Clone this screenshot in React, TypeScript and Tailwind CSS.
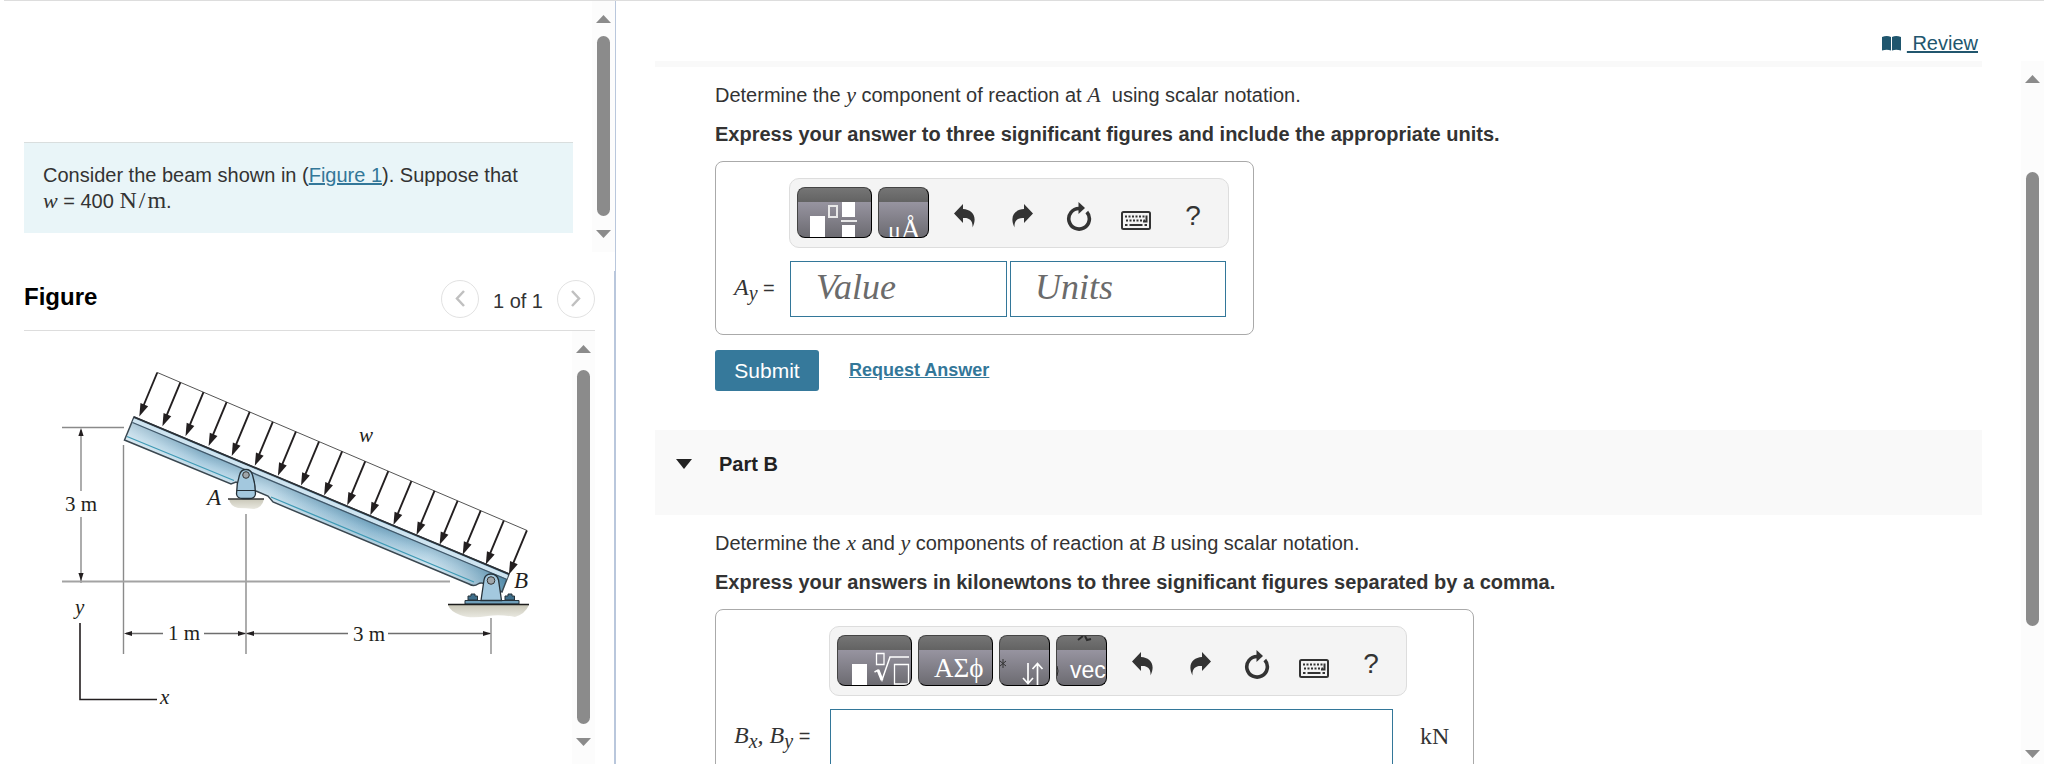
import type { ReactNode } from 'react'

const BLUE = '#a3c8de'

// grey scrollbar, thumb length and offset differ per pane
const Scrollbar = ({ className = '', thumb }: { className?: string; thumb: string }) => {
  return (
    <div className={`flex w-[23px] shrink-0 flex-col items-center bg-[#fcfcfc] ${className}`}>
      <svg width="15" height="8" viewBox="0 0 15 8" className="shrink-0"><path d="M7.5 0 15 8H0z" fill="#8b8b8b" /></svg>
      <div className={`w-[13px] rounded-full bg-[#8b8b8b] ${thumb}`} />
      <svg width="15" height="8" viewBox="0 0 15 8" className="mt-auto shrink-0"><path d="M0 0H15L7.5 8z" fill="#8b8b8b" /></svg>
    </div>
  )
}

const M = ({ children }: { children: ReactNode }) => (
  <i className="font-['Liberation_Serif',serif] text-[22px] leading-none">{children}</i>
)

// variable name in front of an answer field
const Name = ({ children }: { children: ReactNode }) => (
  <i className="font-['Liberation_Serif',serif] text-2xl leading-none">{children}</i>
)

const Sub = ({ children }: { children: ReactNode }) => <sub className="text-xl leading-none">{children}</sub>

const Arrow = ({ x, y, turn, size = 1 }: { x: number; y: number; turn: number; size?: number }) => (
  <path d="M0 0 L-8 -2.6 L-8 2.6 Z" fill="#231f20" transform={`translate(${x} ${y}) rotate(${turn}) scale(${size})`} />
)

const BeamFigure = () => {
  const loads = Array.from({ length: 17 }, (_, i) => ({ x: 157.3 + i * 23.1, y: 372.5 + i * 9.87 }))
  return (
    <svg width="548" height="428" viewBox="24 331 548 428" className="shrink-0" role="img" aria-label="Inclined beam with distributed load w">
      <defs>
        <linearGradient id="web" gradientUnits="userSpaceOnUse" x1="300" y1="489" x2="291" y2="511">
          <stop offset="0" stopColor="#6597b3" />
          <stop offset="0.5" stopColor="#9cc4da" />
          <stop offset="1" stopColor="#cde3ef" />
        </linearGradient>
        <linearGradient id="shine" gradientUnits="userSpaceOnUse" x1="126" y1="430" x2="505" y2="585">
          <stop offset="0" stopColor="#fff" stopOpacity="0.45" />
          <stop offset="0.2" stopColor="#fff" stopOpacity="0.1" />
          <stop offset="0.38" stopColor="#fff" stopOpacity="0.3" />
          <stop offset="0.65" stopColor="#3f7c9d" stopOpacity="0.15" />
          <stop offset="0.8" stopColor="#fff" stopOpacity="0.2" />
          <stop offset="1" stopColor="#2c6d90" stopOpacity="0.6" />
        </linearGradient>
        <linearGradient id="ground" x1="0" y1="0" x2="0" y2="1">
          <stop offset="0" stopColor="#c9c7b8" />
          <stop offset="1" stopColor="#e9e8e0" />
        </linearGradient>
      </defs>

      {/* dimension lines */}
      <g stroke="#8a8a8a" strokeWidth="1.4" fill="none">
        <path d="M62 427.5H124M81 430V491M81 517V583M123.5 445V654M246 514V654M491 618V654" />
        <path d="M62 581.5H450" stroke="#a3a3a3" strokeWidth="2" />
        <path d="M126 633.5H163M204 633.5H245M247 633.5H348M388 633.5H490" stroke="#6e6e6e" />
      </g>
      <Arrow x={81} y={428} turn={-90} />
      <Arrow x={81} y={581} turn={90} />
      <Arrow x={124} y={633.5} turn={180} />
      <Arrow x={246} y={633.5} turn={0} />
      <Arrow x={246} y={633.5} turn={180} />
      <Arrow x={491} y={633.5} turn={0} />
      <path d="M80 623V699.5H157" stroke="#231f20" strokeWidth="1.6" fill="none" />

      {/* beam */}
      <path d="M134 417L509 574L502 592L485 584Q481 582 478 584Q474 587 469 584L273 502L268 496L256 491L236 482L231 484L124.5 440Z" fill="url(#web)" />
      <path d="M134 417L509 574L502 592L485 584Q481 582 478 584Q474 587 469 584L273 502L268 496L256 491L236 482L231 484L124.5 440Z" fill="url(#shine)" stroke="#3a4750" strokeWidth="1.5" />
      <path d="M134 418.5L508 575L507 579L132.5 422Z" fill="#cfe4f0" />
      <path d="M134 417L509 574" stroke="#2b3036" strokeWidth="1.6" />
      <path d="M132.5 422.5L507 579.5" stroke="#41586a" strokeWidth="1.3" />
      <path d="M127 436.5L234 480.5M271 497L474 582" stroke="#3f9ab5" strokeWidth="1.3" />

      {/* distributed load */}
      <path d="M157.3 372.5L526.9 530.4" stroke="#555" strokeWidth="1" />
      {loads.map((p, i) => (
        <g key={i}>
          <path d={`M${p.x} ${p.y}l-15 36`} stroke="#231f20" strokeWidth="1.9" />
          <Arrow x={p.x - 18} y={p.y + 44} turn={113} size={1.6} />
        </g>
      ))}

      {/* support A */}
      <path d="M229 499H264Q262 508 254 509Q246 508 238 508Q230 506 229 499Z" fill="url(#ground)" />
      <path d="M228 499H264" stroke="#333" strokeWidth="1.5" />
      <path d="M246 469.5Q251 469.5 252.5 475Q255.5 484 255.5 494Q255 498.5 249 498.5H243Q237 498.5 236.5 494Q236.5 484 239.5 475Q241 469.5 246 469.5Z" fill={BLUE} stroke="#26323a" strokeWidth="1.3" />
      <path d="M236.5 490.5H255.5" stroke="#26323a" strokeWidth="1" />
      <circle cx="246" cy="475" r="3.3" fill="#9fa6ab" stroke="#333" strokeWidth="1" />

      {/* support B */}
      <path d="M448 605H529Q525 614 515 617Q500 614 488 616Q470 619 460 615Q450 611 448 605Z" fill="url(#ground)" />
      <path d="M465 604V600.5H519V604Z" fill="#6f9fba" stroke="#26323a" strokeWidth="1" />
      <path d="M448 604.5H529" stroke="#1d1d1d" strokeWidth="1.6" />
      <path d="M468 600V596H471V594H475V596H477.5V600ZM505 600V596H508V594H512V596H514.5V600Z" fill="#3f6f8b" stroke="#26323a" strokeWidth="1" />
      <path d="M481 600.5L484 580Q485 574 491 574Q497 574 498.5 580L501.5 600.5Z" fill={BLUE} stroke="#26323a" strokeWidth="1.3" />
      <circle cx="491" cy="580.5" r="3.8" fill="#9fa6ab" stroke="#333" strokeWidth="1" />

      <g fill="#231f20" fontFamily="Liberation Serif, serif" fontSize="21">
        <text x="65" y="511">3 m</text>
        <text x="168" y="640">1 m</text>
        <text x="353" y="641">3 m</text>
        <g fontStyle="italic">
          <text x="207" y="505" fontSize="23">A</text>
          <text x="514" y="588" fontSize="23">B</text>
          <text x="359" y="442">w</text>
          <text x="75" y="614">y</text>
          <text x="160" y="704">x</text>
        </g>
      </g>
    </svg>
  )
}

const TemplateButton = ({ label, wide, children }: { label: string; wide?: boolean; children: ReactNode }) => {
  return (
    <button
      aria-label={label}
      className={`h-[51px] shrink-0 overflow-hidden rounded-lg border border-t-[#444] border-r-black border-b-black border-l-[#444] bg-[linear-gradient(to_bottom,#757575_0,#636363_14px,#9794a0_14px,#6c6b71_100%)] ${wide ? 'w-[75px]' : 'w-[51px]'}`}
    >
      <svg width={wide ? 73 : 49} height="49" viewBox={wide ? '1 1 73 49' : '1 1 49 49'} fill="none">{children}</svg>
    </button>
  )
}

const Fractions = () => (
  <TemplateButton label="Templates" wide>
    <path d="M13 29H28V50H13ZM45 15H58V30H45ZM45 38H58V50H45Z" fill="#fff" />
    <path d="M32 19H40V30H32Z" stroke="#e8e8e8" strokeWidth="2" />
    <path d="M44 34H60" stroke="#e8e8e8" strokeWidth="2" />
  </TemplateButton>
)

const Angstrom = () => (
  <TemplateButton label="Symbols">
    <text x="10" y="51" fill="#fff" fontFamily="Liberation Serif, serif" fontSize="24">μ</text>
    <text x="23" y="51" fill="#fff" fontFamily="Liberation Serif, serif" fontSize="27">Å</text>
  </TemplateButton>
)

const Roots = () => (
  <TemplateButton label="Templates" wide>
    <path d="M15 29H30V50H15Z" fill="#fff" />
    <path d="M39.5 18.5H47V29.5H39.5ZM57.5 29.5H71.5V49H57.5Z" stroke="#fff" strokeWidth="1.3" />
    <path d="M37.5 37L41 35L45 45L53 22H72" stroke="#fff" strokeWidth="1.5" />
    <path d="M41 35L45 45" stroke="#fff" strokeWidth="3" />
  </TemplateButton>
)

const Greek = () => (
  <TemplateButton label="Greek letters" wide>
    <text x="16" y="42" fill="#fff" fontFamily="Liberation Serif, serif" fontSize="27">ΑΣϕ</text>
  </TemplateButton>
)

const UpDown = () => (
  <TemplateButton label="Arrows">
    <path d="M4 24V33M1 26L7 31M7 26L1 31" stroke="#333" strokeWidth="1" />
    <path d="M29 28V48M24 43L29 48.5L34 43M38.5 50V29M33.5 34L38.5 28.5L43.5 34" stroke="#fff" strokeWidth="1.7" />
  </TemplateButton>
)

const Vec = () => (
  <TemplateButton label="Vectors">
    <path d="M22 5L27 1M29 1L31 5L35 4" stroke="#2b2b2b" strokeWidth="2" />
    <path d="M1 31Q3 36 1 41" stroke="#2b2b2b" strokeWidth="1" />
    <text x="14" y="43" fill="#fff" fontFamily="Liberation Sans, sans-serif" fontSize="23">vec</text>
  </TemplateButton>
)

const IconButtons = () => {
  return (
    <div className="ml-[17px] flex items-center gap-[19px] pt-[6px] text-[#333]">
      <button aria-label="Undo" className="flex w-[38px] justify-center">
        <svg width="22" height="24" viewBox="0 0 22 24" fill="currentColor"><path d="M0 9.5L9 0V5C18 5.5 24 12 18.5 23.5C19 16.5 15.5 13.5 9 14V19Z" /></svg>
      </button>
      <button aria-label="Redo" className="flex w-[38px] justify-center">
        <svg width="22" height="24" viewBox="0 0 22 24" fill="currentColor"><path d="M22 9.5L13 0V5C4 5.5 -2 12 3.5 23.5C3 16.5 6.5 13.5 13 14V19Z" /></svg>
      </button>
      <button aria-label="Reset" className="flex w-[38px] justify-center">
        <svg width="26" height="29" viewBox="0 0 26 29" fill="none"><path d="M13 6.5A10.3 10.3 0 1 0 20.8 10" stroke="currentColor" strokeWidth="3.6" /><path d="M12.5 0L19 6L12.5 12Z" fill="currentColor" /></svg>
      </button>
      <button aria-label="Keyboard" className="flex w-[38px] justify-center pt-2">
        <svg width="30" height="19" viewBox="0 0 30 19" fill="none" stroke="currentColor">
          <rect x="1" y="1" width="28" height="17" rx="1.5" strokeWidth="2" />
          <path d="M4 5.5H24M5 9.5H24" strokeWidth="2" strokeDasharray="2 1.5" />
          <path d="M25.5 4.5V10.5H22M8.5 14H21.5" strokeWidth="2" />
          <path d="M4 14H6.5M23.5 14H26" strokeWidth="2" />
        </svg>
      </button>
      <button aria-label="Help" className="w-[38px] text-[28px] leading-7">?</button>
    </div>
  )
}

const Toolbar = ({ children }: { children: ReactNode }) => (
  <div className="flex h-[70px] w-fit rounded-[10px] border border-[#ddd] bg-[#f4f4f4] py-2 pr-4 pl-[7px]">
    <div className="flex gap-[6px]">{children}</div>
    <IconButtons />
  </div>
)

const fieldClass = "h-14 border border-[#337799] pb-1 font-['Liberation_Serif',serif] text-4xl italic outline-none placeholder:text-[#6b6b6b]"
const boxClass = 'grid w-fit rounded-lg border border-[#aaa] pt-4 pb-[17px] pl-[18px] gap-y-[13px]'

const App = () => {
  return (
    <div className="flex h-screen flex-col overflow-hidden bg-white font-['Liberation_Sans',sans-serif] text-xl leading-6 text-[#333]">
      <div className="mr-5 ml-1 h-px shrink-0 bg-[#ddd]" />
      <div className="grid min-h-0 flex-1 grid-cols-[77fr_181fr]">
        {/* left side: problem text and figure */}
        <aside className="flex min-h-0 min-w-0 flex-col">
          <div className="h-[270px] shrink-0 border-r border-[#b9c7dc]">
            <div className="flex h-[251px]">
              <div className="flex-1 pt-[141px] pr-[19px] pl-6">
                <div className="h-[91px] border-t border-[#d9dede] bg-[#e9f5f8] px-[19px] pt-5 leading-[25px]">
                  Consider the beam shown in (<a href="#figure" className="text-[#337799] underline">Figure 1</a>). Suppose that<br />
                  <M>w</M> = 400 <span className="font-['Liberation_Serif',serif] text-2xl leading-none">N&#8202;/&#8202;m</span>.
                </div>
              </div>
              <Scrollbar className="pt-[14px] pb-[14px]" thumb="mt-[13px] h-[180px]" />
            </div>
          </div>
          <div className="flex min-h-0 flex-1 flex-col border-r-2 border-[#b9c7dc] pr-[19px] pl-6">
            <div className="flex h-[60px] shrink-0 items-center border-b border-[#ddd] pb-1">
              <h2 id="figure" className="flex-1 pb-1 text-2xl font-bold text-black">Figure</h2>
              <button aria-label="Previous figure" className="flex size-[38px] items-center justify-center rounded-full border border-[#e2e2e2]">
                <svg width="10" height="17" viewBox="0 0 10 17" fill="none" stroke="#c0c0c0" strokeWidth="2.5"><path d="M9 1L2 8.5L9 16" /></svg>
              </button>
              <span className="mx-[14px] pt-1">1 of 1</span>
              <button aria-label="Next figure" className="flex size-[38px] items-center justify-center rounded-full border border-[#e2e2e2]">
                <svg width="10" height="17" viewBox="0 0 10 17" fill="none" stroke="#c0c0c0" strokeWidth="2.5"><path d="M1 1L8 8.5L1 16" /></svg>
              </button>
            </div>
            <div className="flex min-h-0 flex-1">
              <div className="min-w-0 flex-1 overflow-hidden"><BeamFigure /></div>
              <Scrollbar className="pt-[14px] pb-[18px]" thumb="mt-[17px] mb-[14px] flex-1" />
            </div>
          </div>
        </aside>

        {/* right side: the parts */}
        <main className="mr-5 flex min-h-0 min-w-0 flex-col">
          <div className="flex h-[60px] shrink-0 items-center justify-end pt-[30px] pr-[66px] pb-[6px] text-[#21566e]">
            <svg width="19" height="15" viewBox="0 0 19 15" fill="#1f566e" className="mr-[6px]"><path d="M0 1Q5 -1 9 1V14.5Q5 13 0 14.5ZM10 1Q14 -1 19 1V14.5Q14 13 10 14.5Z" /></svg>
            <a href="#review" className="whitespace-pre underline"> Review</a>
          </div>
          <div className="flex min-h-0 flex-1">
            <div className="min-w-0 flex-1 overflow-hidden px-[39px]">
              <div className="h-[6px] bg-[#f9f9f9]" />
              <section className="h-[363px] pt-4 pl-[60px]">
                <p className="mb-[15px] h-6">Determine the <M>y</M> component of reaction at <M>A</M> &nbsp;using scalar notation.</p>
                <p className="mb-[15px] font-bold">Express your answer to three significant figures and include the appropriate units.</p>
                <div className={`${boxClass} grid-cols-[55px_auto] pr-6`}>
                  <div className="col-start-2">
                    <Toolbar><Fractions /><Angstrom /></Toolbar>
                  </div>
                  <label htmlFor="value" className="self-center pb-1 whitespace-nowrap"><Name>A<Sub>y</Sub></Name> =</label>
                  <div className="flex gap-[3px] pr-[3px] pl-px">
                    <input id="value" placeholder="Value" className={`${fieldClass} w-[217px] pl-[25px]`} />
                    <input aria-label="Units" placeholder="Units" className={`${fieldClass} w-[216px] pl-[24px]`} />
                  </div>
                </div>
                <div className="mt-[15px] flex items-center gap-[30px]">
                  <button className="h-[41px] w-[104px] rounded-[3px] bg-[#36799b] text-[21px] text-white">Submit</button>
                  <a href="#answer" className="pb-[2px] text-lg font-bold text-[#337799] underline">Request Answer</a>
                </div>
              </section>
              <div className="flex h-[85px] items-start bg-[#f9f9f9] pt-[22px] pl-[21px] font-bold text-[#222]">
                <button className="flex items-center gap-[27px]">
                  <svg width="16" height="10" viewBox="0 0 16 10" fill="#222"><path d="M0 0H16L8 10Z" /></svg>
                  Part B
                </button>
              </div>
              <section className="pt-4 pl-[60px]">
                <p className="mb-[15px] h-6">Determine the <M>x</M> and <M>y</M> components of reaction at <M>B</M> using scalar notation.</p>
                <p className="mb-[15px] font-bold">Express your answers in kilonewtons to three significant figures separated by a comma.</p>
                <div className={`${boxClass} grid-cols-[95px_auto_auto] pr-6`}>
                  <div className="col-start-2">
                    <Toolbar><Roots /><Greek /><UpDown /><Vec /></Toolbar>
                  </div>
                  <label htmlFor="components" className="col-start-1 self-center pb-1 whitespace-nowrap"><Name>B<Sub>x</Sub>, B<Sub>y</Sub></Name> =</label>
                  <input id="components" className={`${fieldClass} ml-px w-[563px]`} />
                  <span className="ml-[13px] self-center pb-[2px] font-['Liberation_Serif',serif] text-2xl">kN</span>
                </div>
              </section>
            </div>
            <Scrollbar className="pt-[14px] pb-[6px]" thumb="mt-[89px] h-[454px]" />
          </div>
        </main>
      </div>
    </div>
  )
}

export default App
